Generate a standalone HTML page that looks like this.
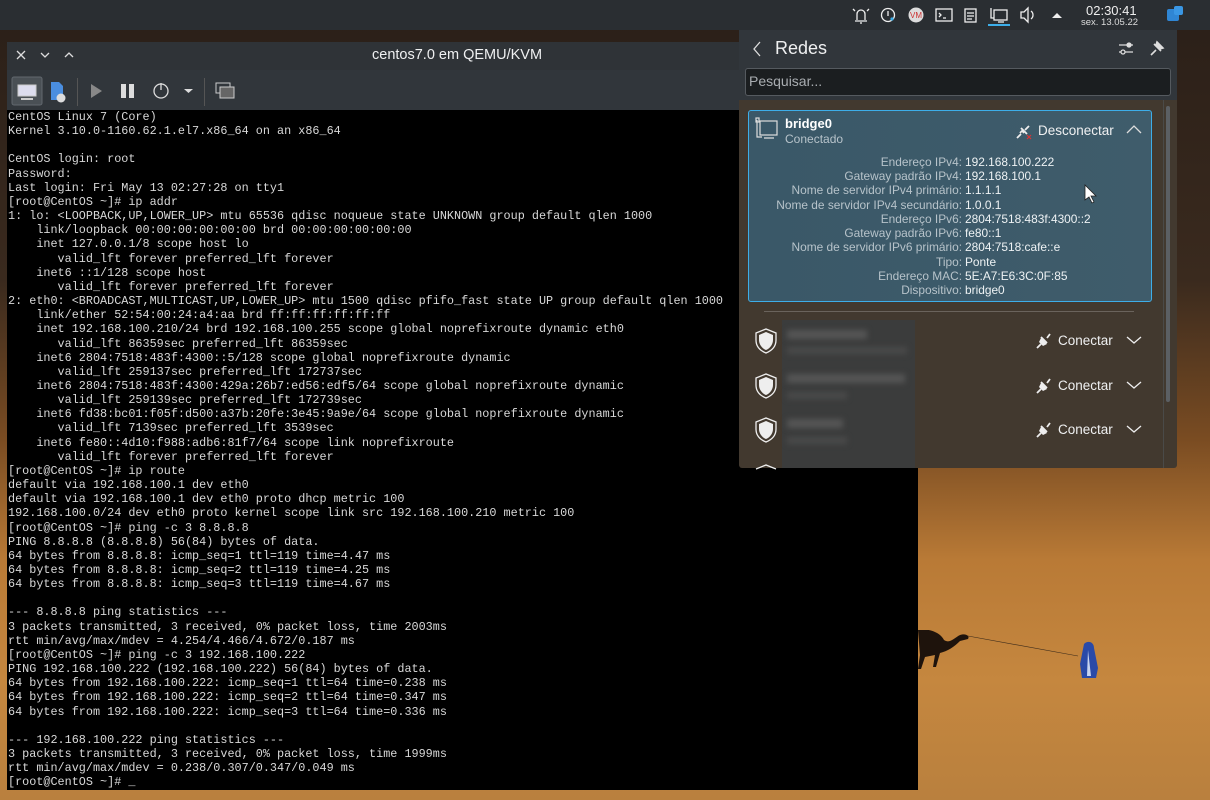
<!DOCTYPE html>
<html><head><meta charset="utf-8"><style>
*{margin:0;padding:0;box-sizing:border-box}
body{width:1210px;height:800px;overflow:hidden;position:relative;font-family:"Liberation Sans",sans-serif;
background:linear-gradient(180deg,#2a1f18 0%,#3a2a1e 35%,#7a4c22 55%,#b97a36 70%,#c5873f 85%,#b9803e 100%)}
.panel{position:absolute;left:0;top:0;width:1210px;height:30px;background:#2a2e32}
.win{position:absolute;left:7px;top:42px;width:911px;height:748px;background:#2f3337}
.term{position:absolute;left:7px;top:110px;width:911px;height:680px;background:#000;color:#d8d8d8;
font-family:"Liberation Mono",monospace;font-size:11.8px;line-height:14.16px;padding:0 0 0 1px;white-space:pre;overflow:hidden}
.popup{position:absolute;left:739px;top:30px;width:438px;height:438px;background:#42392f;border-radius:0 0 3px 3px}
.ptop{position:absolute;left:0;top:0;width:438px;height:70px;background:#31363b}
.det{position:absolute;left:748px;top:110px;width:404px;height:192px;background:linear-gradient(90deg,#3a5868,#3f5c6b);border:1px solid #3daee9;border-radius:3px}
.lab{position:absolute;left:760px;width:202px;text-align:right;color:#b7c3ca;font-size:11.9px}
.val{position:absolute;left:965px;color:#eef2f4;font-size:11.9px}
</style></head><body>
<div class="panel"></div>
<svg style="position:absolute;left:850px;top:4px" width="340" height="26" viewBox="850 4 340 26">
<g fill="none" stroke="#eee" stroke-width="1.3">
<path d="M855 21h12M857 20v-6a4 4 0 018 0v6M853 9l2 2M869 9l-2 2M861 22v2"/>
<circle cx="888" cy="15" r="6.5"/><path d="M888 11v5"/>
<rect x="936" y="9" width="16" height="12"/><path d="M939 13l2 2-2 2M943 18h3"/>
<rect x="965" y="9" width="11" height="13"/><path d="M967 13h7M967 16h7M967 19h5"/>
<rect x="994" y="10" width="13" height="10"/><path d="M998 22h6M991 8v10h3"/>
<path d="M1021 12h3l4-4v14l-4-4h-3z"/><path d="M1031 11a5 5 0 010 8"/>
</g>
<circle cx="916" cy="15" r="7.5" fill="#ddd"/><text x="910" y="18" font-size="8" fill="#c33" font-family="Liberation Sans">VM</text>
<circle cx="892" cy="19" r="1.6" fill="#3daee9"/>
<rect x="988" y="24" width="22" height="2" fill="#3daee9"/>
<path d="M1052 18l5-5 5 5z" fill="#eee"/>
<rect x="1167" y="9" width="12" height="12" rx="2" fill="#2f86d4"/><rect x="1174" y="6" width="9" height="9" rx="2" fill="#3a97e4"/>
<rect x="1202" y="0" width="1" height="30" fill="#555"/>
</svg>
<div style="position:absolute;left:1086px;top:3px;color:#eee;font-size:13px">02:30:41</div>
<div style="position:absolute;left:1081px;top:17px;color:#ddd;font-size:9.5px">sex. 13.05.22</div>

<div class="win"></div>
<div style="position:absolute;left:7px;top:70px;width:911px;height:40px;background:#31363b"></div>
<div style="position:absolute;left:372px;top:47px;color:#eff0f1;font-size:14.5px">centos7.0 em QEMU/KVM</div>
<svg style="position:absolute;left:7px;top:42px" width="260" height="68">
<g fill="none" stroke="#ddd" stroke-width="1.3"><path d="M10 9l8 8M18 9l-8 8M34 11l4 4 4-4M58 15l4-4 4 4"/></g>
<rect x="5" y="35" width="30" height="28" rx="2" fill="#4a5055" stroke="#62686e"/>
<rect x="11" y="43" width="18" height="11" fill="#dde" stroke="#ccc"/><rect x="14" y="56" width="12" height="2" fill="#ccc"/>
<path d="M44 40h8l4 4v14h-12z" fill="#4a8ee0"/><circle cx="54" cy="56" r="4.5" fill="#ddd"/>
<rect x="70" y="36" width="1" height="28" fill="#555"/>
<path d="M84 42l11 7-11 7z" fill="#888"/>
<rect x="114" y="42" width="5" height="14" fill="#ddd"/><rect x="122" y="42" width="5" height="14" fill="#ddd"/>
<circle cx="154" cy="49" r="7" fill="none" stroke="#ddd" stroke-width="1.3"/><path d="M154 41v7" stroke="#ddd" stroke-width="1.3"/>
<path d="M177 47h9l-4.5 4z" fill="#ddd"/>
<rect x="197" y="36" width="1" height="28" fill="#555"/>
<rect x="209" y="41" width="14" height="10" fill="none" stroke="#ccc"/><rect x="213" y="45" width="14" height="11" fill="#666" stroke="#ccc"/>
</svg>
<div class="term">CentOS Linux 7 (Core)
Kernel 3.10.0-1160.62.1.el7.x86_64 on an x86_64

CentOS login: root
Password:
Last login: Fri May 13 02:27:28 on tty1
[root@CentOS ~]# ip addr
1: lo: &lt;LOOPBACK,UP,LOWER_UP&gt; mtu 65536 qdisc noqueue state UNKNOWN group default qlen 1000
    link/loopback 00:00:00:00:00:00 brd 00:00:00:00:00:00
    inet 127.0.0.1/8 scope host lo
       valid_lft forever preferred_lft forever
    inet6 ::1/128 scope host
       valid_lft forever preferred_lft forever
2: eth0: &lt;BROADCAST,MULTICAST,UP,LOWER_UP&gt; mtu 1500 qdisc pfifo_fast state UP group default qlen 1000
    link/ether 52:54:00:24:a4:aa brd ff:ff:ff:ff:ff:ff
    inet 192.168.100.210/24 brd 192.168.100.255 scope global noprefixroute dynamic eth0
       valid_lft 86359sec preferred_lft 86359sec
    inet6 2804:7518:483f:4300::5/128 scope global noprefixroute dynamic
       valid_lft 259137sec preferred_lft 172737sec
    inet6 2804:7518:483f:4300:429a:26b7:ed56:edf5/64 scope global noprefixroute dynamic
       valid_lft 259139sec preferred_lft 172739sec
    inet6 fd38:bc01:f05f:d500:a37b:20fe:3e45:9a9e/64 scope global noprefixroute dynamic
       valid_lft 7139sec preferred_lft 3539sec
    inet6 fe80::4d10:f988:adb6:81f7/64 scope link noprefixroute
       valid_lft forever preferred_lft forever
[root@CentOS ~]# ip route
default via 192.168.100.1 dev eth0
default via 192.168.100.1 dev eth0 proto dhcp metric 100
192.168.100.0/24 dev eth0 proto kernel scope link src 192.168.100.210 metric 100
[root@CentOS ~]# ping -c 3 8.8.8.8
PING 8.8.8.8 (8.8.8.8) 56(84) bytes of data.
64 bytes from 8.8.8.8: icmp_seq=1 ttl=119 time=4.47 ms
64 bytes from 8.8.8.8: icmp_seq=2 ttl=119 time=4.25 ms
64 bytes from 8.8.8.8: icmp_seq=3 ttl=119 time=4.67 ms

--- 8.8.8.8 ping statistics ---
3 packets transmitted, 3 received, 0% packet loss, time 2003ms
rtt min/avg/max/mdev = 4.254/4.466/4.672/0.187 ms
[root@CentOS ~]# ping -c 3 192.168.100.222
PING 192.168.100.222 (192.168.100.222) 56(84) bytes of data.
64 bytes from 192.168.100.222: icmp_seq=1 ttl=64 time=0.238 ms
64 bytes from 192.168.100.222: icmp_seq=2 ttl=64 time=0.347 ms
64 bytes from 192.168.100.222: icmp_seq=3 ttl=64 time=0.336 ms

--- 192.168.100.222 ping statistics ---
3 packets transmitted, 3 received, 0% packet loss, time 1999ms
rtt min/avg/max/mdev = 0.238/0.307/0.347/0.049 ms
[root@CentOS ~]# _</div>

<svg style="position:absolute;left:918px;top:630px" width="200" height="70">
<path d="M0 0c10-2 22 2 26 10 6 4 10-2 16-5 6-2 10 1 8 4l-8 2c-6 6-12 10-20 12l-4 14-3 0 2-12-10 2-4 12-3 0 2-14z" fill="#1e130c"/>
<path d="M50 6l110 20" stroke="#3a2a1a" stroke-width=".6"/>
<path d="M166 14c4-4 10-2 10 4l4 20-2 10h-14l-2-14z" fill="#2a4aa8"/>
<path d="M170 20l3 26h-4z" fill="#c8d4f0"/>
</svg>

<div class="popup">
<div class="ptop"></div>
<div style="position:absolute;left:6px;top:38px;width:426px;height:28px;background:#1b1e20;border:1px solid #555a5f;border-radius:3px"></div>
<div style="position:absolute;left:10px;top:43px;color:#a9adb1;font-size:14px">Pesquisar...</div>
<div style="position:absolute;left:36px;top:8px;color:#eff0f1;font-size:18px">Redes</div>
<svg style="position:absolute;left:0;top:0" width="438" height="438">
<g stroke="#ddd" stroke-width="1.3" fill="none"><path d="M21 12l-6 7 6 7M380 15h14M380 22h14"/><circle cx="390" cy="15" r="2" fill="#ddd"/><circle cx="384" cy="22" r="2" fill="#31363b"/></g>
<path d="M412 25l5-5M415 14l7 7M418 12l6 6-3 1-4-4z" stroke="#ddd" stroke-width="1.6" fill="#ddd"/>
<rect x="427" y="76" width="4" height="296" rx="2" fill="#5b5f63"/>
<rect x="424" y="70" width="1" height="368" fill="#4a4a48"/>
<rect x="25" y="281" width="370" height="1" fill="#6a635c"/>
</svg>
</div>
<div class="det"></div>
<svg style="position:absolute;left:754px;top:116px" width="30" height="28"><g fill="none" stroke="#ddd" stroke-width="1.2"><rect x="6" y="5" width="17" height="14"/><path d="M3 4v17h5M10 22h10"/><rect x="2" y="2" width="3" height="4"/></g></svg>
<div style="position:absolute;left:785px;top:116px;color:#fff;font-size:13px;font-weight:bold">bridge0</div>
<div style="position:absolute;left:785px;top:132px;color:#b7c3ca;font-size:12px">Conectado</div>
<svg style="position:absolute;left:1014px;top:123px" width="20" height="18"><g stroke="#eee" stroke-width="1.8"><path d="M3 15l4-4M11 7l4-4M7 5l6 6"/><path d="M6 10l2-2 2 2" /></g><path d="M13 12l4 4M17 12l-4 4" stroke="#d33" stroke-width="1.2"/></svg>
<div style="position:absolute;left:1038px;top:123px;color:#eff0f1;font-size:13.5px">Desconectar</div>
<svg style="position:absolute;left:1125px;top:124px" width="18" height="12"><path d="M2 9l7-7 7 7" fill="none" stroke="#ddd" stroke-width="1.3"/></svg>

<div class="lab" style="top:155px">Endereço IPv4:</div><div class="val" style="top:155px">192.168.100.222</div>
<div class="lab" style="top:169px">Gateway padrão IPv4:</div><div class="val" style="top:169px">192.168.100.1</div>
<div class="lab" style="top:183px">Nome de servidor IPv4 primário:</div><div class="val" style="top:183px">1.1.1.1</div>
<div class="lab" style="top:198px">Nome de servidor IPv4 secundário:</div><div class="val" style="top:198px">1.0.0.1</div>
<div class="lab" style="top:212px">Endereço IPv6:</div><div class="val" style="top:212px">2804:7518:483f:4300::2</div>
<div class="lab" style="top:226px">Gateway padrão IPv6:</div><div class="val" style="top:226px">fe80::1</div>
<div class="lab" style="top:240px">Nome de servidor IPv6 primário:</div><div class="val" style="top:240px">2804:7518:cafe::e</div>
<div class="lab" style="top:255px">Tipo:</div><div class="val" style="top:255px">Ponte</div>
<div class="lab" style="top:269px">Endereço MAC:</div><div class="val" style="top:269px">5E:A7:E6:3C:0F:85</div>
<div class="lab" style="top:283px">Dispositivo:</div><div class="val" style="top:283px">bridge0</div>
<svg style="position:absolute;left:1083px;top:184px" width="14" height="20"><path d="M2 1v15l4-3 3 6 2-1-3-6h5z" fill="#fff" stroke="#222" stroke-width=".8"/></svg>

<div style="position:absolute;left:782px;top:320px;width:133px;height:148px;background:#3b3c3c"></div>
<div style="position:absolute;left:787px;top:330px;width:80px;height:9px;background:#555;filter:blur(3px)"></div>
<div style="position:absolute;left:787px;top:347px;width:120px;height:7px;background:#4a4a4a;filter:blur(3px)"></div>
<div style="position:absolute;left:787px;top:374px;width:118px;height:9px;background:#555;filter:blur(3px)"></div>
<div style="position:absolute;left:787px;top:392px;width:60px;height:7px;background:#4a4a4a;filter:blur(3px)"></div>
<div style="position:absolute;left:787px;top:419px;width:56px;height:9px;background:#555;filter:blur(3px)"></div>
<div style="position:absolute;left:787px;top:437px;width:60px;height:7px;background:#4a4a4a;filter:blur(3px)"></div>

<svg style="position:absolute;left:739px;top:320px" width="438" height="150">
<g fill="none" stroke="#eee" stroke-width="1.3">
<path d="M17 13l10-4 10 4v7c0 7-5 11-10 13-5-2-10-6-10-13z"/><path d="M17 58l10-4 10 4v7c0 7-5 11-10 13-5-2-10-6-10-13z"/><path d="M17 102l10-4 10 4v7c0 7-5 11-10 13-5-2-10-6-10-13z"/>
<path d="M388 17l7 6 7-6M388 62l7 6 7-6M388 106l7 6 7-6"/>
<path d="M17 149l10-4 10 4"/>
</g>
<g fill="#eee"><path d="M20 15l7-3 7 3v5c0 5-4 9-7 10-3-1-7-5-7-10z"/><path d="M20 60l7-3 7 3v5c0 5-4 9-7 10-3-1-7-5-7-10z"/><path d="M20 104l7-3 7 3v5c0 5-4 9-7 10-3-1-7-5-7-10z"/></g>
<g stroke="#eee" stroke-width="1.8"><path d="M298 28l4-4M308 18l3-4M302 17l6 6M298 73l4-4M308 63l3-4M302 62l6 6M298 117l4-4M308 107l3-4M302 106l6 6"/></g>
<g fill="#eee"><path d="M302 18l-2 4 4 4 4-2z"/><path d="M302 63l-2 4 4 4 4-2z"/><path d="M302 107l-2 4 4 4 4-2z"/></g>
</svg>
<div style="position:absolute;left:1058px;top:333px;color:#eff0f1;font-size:13.5px">Conectar</div>
<div style="position:absolute;left:1058px;top:378px;color:#eff0f1;font-size:13.5px">Conectar</div>
<div style="position:absolute;left:1058px;top:422px;color:#eff0f1;font-size:13.5px">Conectar</div>
</body></html>
